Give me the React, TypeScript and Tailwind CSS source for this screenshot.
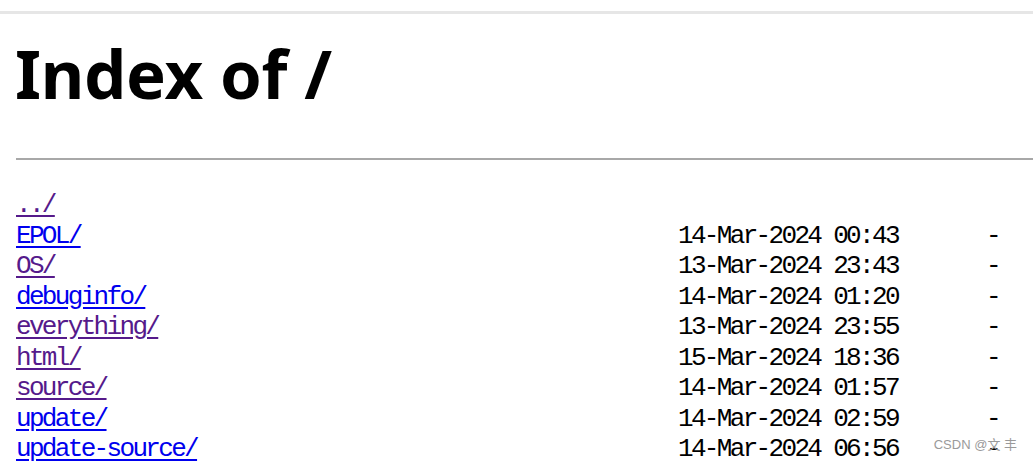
const rows: { name: string; date: string; visited: boolean }[] = [
  { name: "EPOL/", date: "14-Mar-2024 00:43", visited: false },
  { name: "OS/", date: "13-Mar-2024 23:43", visited: true },
  { name: "debuginfo/", date: "14-Mar-2024 01:20", visited: false },
  { name: "everything/", date: "13-Mar-2024 23:55", visited: true },
  { name: "html/", date: "15-Mar-2024 18:36", visited: true },
  { name: "source/", date: "14-Mar-2024 01:57", visited: true },
  { name: "update/", date: "14-Mar-2024 02:59", visited: false },
  { name: "update-source/", date: "14-Mar-2024 06:56", visited: false },
]

export default function App() {
  return (
    <div className="relative w-[1033px] h-[462px] overflow-hidden bg-white">
      <div className="mt-[11px] h-[3px] w-full bg-[#e6e6e6]" />
      <h1 className="ml-[15px] mt-[19px] text-[67px] leading-[80px] font-bold text-black tracking-[-0.3px] [font-family:'Noto_Sans',sans-serif]">
        Index of /
      </h1>
      <hr className="ml-4 mt-[45px] border-0 h-[2px] bg-[#a8a8a8]" />
      <div className="ml-4 mt-[30px] text-[26px] leading-[30.5px] tracking-[-2.67px] [font-family:'Liberation_Mono',monospace] whitespace-pre">
        <div>
          <a href="#" className="text-[#551a8b] underline underline-offset-[3px]">../</a>
        </div>
        {rows.map((r) => (
          <div key={r.name} className="grid grid-cols-[662px_219px_1fr]">
            <div>
              <a
                href="#"
                className={
                  (r.visited ? "text-[#551a8b]" : "text-[#0000ee]") +
                  " underline underline-offset-[3px]"
                }
              >
                {r.name}
              </a>
            </div>
            <div className="text-black">{r.date}</div>
            <div className="pl-[89px] text-black">-</div>
          </div>
        ))}
      </div>
      <div className="absolute right-[16px] bottom-[8px] text-[13px] text-[#9a9a9a] [font-family:'Liberation_Sans','Noto_Sans_CJK_SC',sans-serif]">
        CSDN @文 丰
      </div>
    </div>
  )
}
